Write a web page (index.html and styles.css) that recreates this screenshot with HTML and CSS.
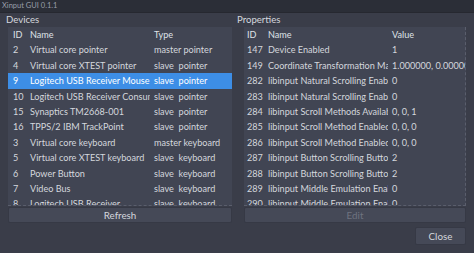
FILE: index.html
```html
<!DOCTYPE html>
<html lang="en">
<head>
    <meta charset="UTF-8">
    <title>Xinput GUI 0.1.1</title>
    <link rel="stylesheet" href="styles.css">
</head>
<body>
    <div class="window">
        <div class="titlebar">Xinput GUI 0.1.1</div>

        <div class="panes">
            <!-- Devices list -->
            <div class="group devices">
                <div class="group-label">Devices</div>
                <div class="table">
                    <div class="row head"><span>ID</span><span>Name</span><span>Type</span></div>
                    <div class="row"><span>2</span><span>Virtual core pointer</span><span>master pointer</span></div>
                    <div class="row"><span>4</span><span>Virtual core XTEST pointer</span><span>slave&nbsp; pointer</span></div>
                    <div class="row selected"><span>9</span><span>Logitech USB Receiver Mouse</span><span>slave&nbsp; pointer</span></div>
                    <div class="row"><span>10</span><span>Logitech USB Receiver Consumer Control</span><span>slave&nbsp; pointer</span></div>
                    <div class="row"><span>15</span><span>Synaptics TM2668-001</span><span>slave&nbsp; pointer</span></div>
                    <div class="row"><span>16</span><span>TPPS/2 IBM TrackPoint</span><span>slave&nbsp; pointer</span></div>
                    <div class="row"><span>3</span><span>Virtual core keyboard</span><span>master keyboard</span></div>
                    <div class="row"><span>5</span><span>Virtual core XTEST keyboard</span><span>slave&nbsp; keyboard</span></div>
                    <div class="row"><span>6</span><span>Power Button</span><span>slave&nbsp; keyboard</span></div>
                    <div class="row"><span>7</span><span>Video Bus</span><span>slave&nbsp; keyboard</span></div>
                    <div class="row"><span>8</span><span>Logitech USB Receiver</span><span>slave&nbsp; keyboard</span></div>
                </div>
                <button class="btn wide">Refresh</button>
            </div>

            <!-- Properties of the selected device -->
            <div class="group props">
                <div class="group-label">Properties</div>
                <div class="table">
                    <div class="row head"><span>ID</span><span>Name</span><span>Value</span></div>
                    <div class="row"><span>147</span><span>Device Enabled</span><span>1</span></div>
                    <div class="row"><span>149</span><span>Coordinate Transformation Matrix</span><span>1.000000, 0.000000</span></div>
                    <div class="row"><span>282</span><span>libinput Natural Scrolling Enabled</span><span>0</span></div>
                    <div class="row"><span>283</span><span>libinput Natural Scrolling Enabled Default</span><span>0</span></div>
                    <div class="row"><span>284</span><span>libinput Scroll Methods Available</span><span>0, 0, 1</span></div>
                    <div class="row"><span>285</span><span>libinput Scroll Method Enabled</span><span>0, 0, 0</span></div>
                    <div class="row"><span>286</span><span>libinput Scroll Method Enabled Default</span><span>0, 0, 0</span></div>
                    <div class="row"><span>287</span><span>libinput Button Scrolling Button</span><span>2</span></div>
                    <div class="row"><span>288</span><span>libinput Button Scrolling Button Default</span><span>2</span></div>
                    <div class="row"><span>289</span><span>libinput Middle Emulation Enabled</span><span>0</span></div>
                    <div class="row"><span>290</span><span>libinput Middle Emulation Enabled Default</span><span>0</span></div>
                </div>
                <button class="btn wide" disabled>Edit</button>
            </div>
        </div>

        <div class="footer">
            <button class="btn close">Close</button>
        </div>
    </div>
</body>
</html>
```

FILE: styles.css
```css
body {
    margin: 0;
    padding: 0;
    font-family: 'Lato', 'Noto Sans', sans-serif;
    font-size: 9.1px;
    color: #d4d7dd;
    background-color: #3a3d49;
}

.window {
    width: 474px;
    height: 253px;
    display: flex;
    flex-direction: column;
    overflow: hidden;
}

.titlebar {
    height: 12px;
    line-height: 11px;
    padding-left: 2px;
    font-size: 7.5px;
    color: #9a9eaa;
    background-color: #2b2e37;
    border-bottom: 1px solid #262830;
}

.panes {
    display: flex;
}

.group {
    display: flex;
    flex-direction: column;
}

.group-label {
    height: 14px;
    line-height: 14px;
    font-size: 9.6px;
}

.devices {
    width: 236px;
    padding-left: 6px;
    box-sizing: border-box;
}

.devices .table,
.devices .btn {
    margin-left: 2px;
    width: 224px;
}

.props {
    flex: 1;
    padding-left: 1px;
}

.props .table,
.props .btn {
    margin-left: 7px;
    width: 222px;
}

.table {
    height: 179px;
    overflow: hidden;
    background-color: #414553;
    border-bottom: 1px dashed #5a5e6c;
    box-sizing: border-box;
}

.props .table {
    border-right: 1px dashed #5a5e6c;
}

.row {
    display: grid;
    height: 15.4px;
    line-height: 15.4px;
    white-space: nowrap;
}

.devices .row {
    grid-template-columns: 18px 124px 82px;
}

.props .row {
    grid-template-columns: 20px 124px 78px;
}

.row span {
    overflow: hidden;
    padding-left: 4px;
}

.props .row span:first-child {
    padding-left: 3px;
}

.devices .row span:first-child {
    padding-left: 5px;
}

.row.head {
    color: #dfe2e7;
}

.row.selected {
    background-color: #3d8ee6;
    color: #ffffff;
}

.btn {
    font-family: inherit;
    font-size: 9.8px;
    color: #d4d7dd;
    background-color: #454957;
    border: 1px solid #363945;
    border-radius: 2px;
    padding: 0;
    outline: none;
}

.btn.wide {
    height: 16px;
    margin-top: 1px;
}

.btn:disabled {
    color: #6f7380;
}

.footer {
    display: flex;
    justify-content: flex-end;
    padding: 4px 8px 0 0;
}

.btn.close {
    width: 51px;
    height: 18px;
}
```
